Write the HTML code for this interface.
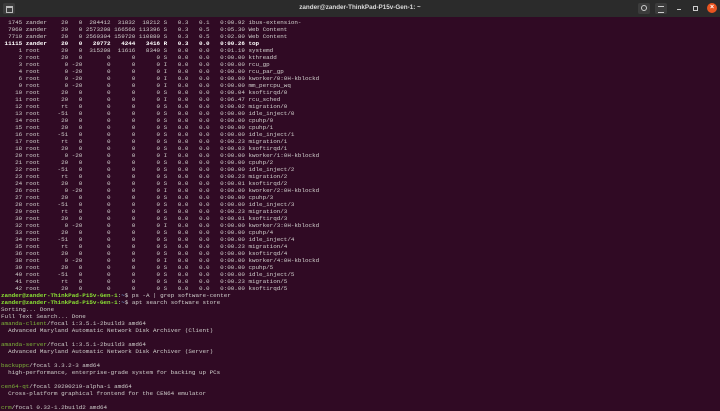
<!DOCTYPE html>
<html><head><meta charset="utf-8"><style>
html,body{margin:0;padding:0;width:720px;height:410px;overflow:hidden;background:#300a24;}
.bar{position:absolute;left:0;top:0;width:720px;height:17px;background:#2b2b2b;}
.title{position:absolute;left:0;width:720px;top:4px;text-align:center;color:#dcdcdc;font:bold 6.3px "Liberation Sans",sans-serif;}
.ib{position:absolute;top:3px;width:12px;height:11px;background:#3c3c3c;border-radius:2px;}
pre{position:absolute;left:1px;top:19px;margin:0;font-family:"Liberation Mono",monospace;font-size:5.9px;line-height:7px;color:#d0cfcc;white-space:pre;}
.g{color:#8ae234;font-weight:bold}.b{color:#729fcf;font-weight:bold}.p{color:#7fb83a}.w{color:#fff;font-weight:bold}
</style></head><body>
<div class="bar">
<div class="ib" style="left:3px"><div style="position:absolute;left:3px;top:3px;width:5px;height:4px;border:1px solid #bbb;border-top-width:2px"></div></div>
<div class="title">zander@zander-ThinkPad-P15v-Gen-1: ~</div>
<div class="ib" style="left:638px"><div style="position:absolute;left:3px;top:2px;width:4px;height:4px;border:1px solid #ccc;border-radius:50%"></div></div>
<div class="ib" style="left:655px"><div style="position:absolute;left:3px;top:3px;width:6px;height:5px;border-top:1px solid #ccc;border-bottom:1px solid #ccc"></div></div>
<div style="position:absolute;left:677px;top:9px;width:4px;height:1px;background:#ccc"></div>
<div style="position:absolute;left:693px;top:6px;width:3px;height:3px;border:1px solid #ccc"></div>
<div style="position:absolute;left:707px;top:3px;width:10px;height:10px;border-radius:50%;background:#e95420;color:#fff;font:bold 7px/10px 'Liberation Sans',sans-serif;text-align:center">×</div>
</div>
<pre>  1745 zander    20   0  284412  31832  18212 S   0.3   0.1   0:00.92 ibus-extension-
  7060 zander    20   0 2573208 166560 113396 S   0.3   0.5   0:05.30 Web Content
  7710 zander    20   0 2560304 159720 110880 S   0.3   0.5   0:02.80 Web Content
<span class="w"> 11115 zander    20   0   20772   4244   3416 R   0.3   0.0   0:00.26 top</span>
     1 root      20   0  315208  11616   8340 S   0.0   0.0   0:01.19 systemd
     2 root      20   0       0      0      0 S   0.0   0.0   0:00.00 kthreadd
     3 root       0 -20       0      0      0 I   0.0   0.0   0:00.00 rcu_gp
     4 root       0 -20       0      0      0 I   0.0   0.0   0:00.00 rcu_par_gp
     6 root       0 -20       0      0      0 I   0.0   0.0   0:00.00 kworker/0:0H-kblockd
     9 root       0 -20       0      0      0 I   0.0   0.0   0:00.00 mm_percpu_wq
    10 root      20   0       0      0      0 S   0.0   0.0   0:00.04 ksoftirqd/0
    11 root      20   0       0      0      0 I   0.0   0.0   0:06.47 rcu_sched
    12 root      rt   0       0      0      0 S   0.0   0.0   0:00.02 migration/0
    13 root     -51   0       0      0      0 S   0.0   0.0   0:00.00 idle_inject/0
    14 root      20   0       0      0      0 S   0.0   0.0   0:00.00 cpuhp/0
    15 root      20   0       0      0      0 S   0.0   0.0   0:00.00 cpuhp/1
    16 root     -51   0       0      0      0 S   0.0   0.0   0:00.00 idle_inject/1
    17 root      rt   0       0      0      0 S   0.0   0.0   0:00.23 migration/1
    18 root      20   0       0      0      0 S   0.0   0.0   0:00.03 ksoftirqd/1
    20 root       0 -20       0      0      0 I   0.0   0.0   0:00.00 kworker/1:0H-kblockd
    21 root      20   0       0      0      0 S   0.0   0.0   0:00.00 cpuhp/2
    22 root     -51   0       0      0      0 S   0.0   0.0   0:00.00 idle_inject/2
    23 root      rt   0       0      0      0 S   0.0   0.0   0:00.23 migration/2
    24 root      20   0       0      0      0 S   0.0   0.0   0:00.01 ksoftirqd/2
    26 root       0 -20       0      0      0 I   0.0   0.0   0:00.00 kworker/2:0H-kblockd
    27 root      20   0       0      0      0 S   0.0   0.0   0:00.00 cpuhp/3
    28 root     -51   0       0      0      0 S   0.0   0.0   0:00.00 idle_inject/3
    29 root      rt   0       0      0      0 S   0.0   0.0   0:00.23 migration/3
    30 root      20   0       0      0      0 S   0.0   0.0   0:00.01 ksoftirqd/3
    32 root       0 -20       0      0      0 I   0.0   0.0   0:00.00 kworker/3:0H-kblockd
    33 root      20   0       0      0      0 S   0.0   0.0   0:00.00 cpuhp/4
    34 root     -51   0       0      0      0 S   0.0   0.0   0:00.00 idle_inject/4
    35 root      rt   0       0      0      0 S   0.0   0.0   0:00.23 migration/4
    36 root      20   0       0      0      0 S   0.0   0.0   0:00.00 ksoftirqd/4
    38 root       0 -20       0      0      0 I   0.0   0.0   0:00.00 kworker/4:0H-kblockd
    39 root      20   0       0      0      0 S   0.0   0.0   0:00.00 cpuhp/5
    40 root     -51   0       0      0      0 S   0.0   0.0   0:00.00 idle_inject/5
    41 root      rt   0       0      0      0 S   0.0   0.0   0:00.23 migration/5
    42 root      20   0       0      0      0 S   0.0   0.0   0:00.00 ksoftirqd/5
<span class="g">zander@zander-ThinkPad-P15v-Gen-1</span>:<span class="b">~</span>$ ps -A | grep software-center
<span class="g">zander@zander-ThinkPad-P15v-Gen-1</span>:<span class="b">~</span>$ apt search software store
Sorting... Done
Full Text Search... Done
<span class="p">amanda-client</span>/focal 1:3.5.1-2build3 amd64
  Advanced Maryland Automatic Network Disk Archiver (Client)

<span class="p">amanda-server</span>/focal 1:3.5.1-2build3 amd64
  Advanced Maryland Automatic Network Disk Archiver (Server)

<span class="p">backuppc</span>/focal 3.3.2-3 amd64
  high-performance, enterprise-grade system for backing up PCs

<span class="p">cen64-qt</span>/focal 20200219-alpha-1 amd64
  Cross-platform graphical frontend for the CEN64 emulator

<span class="p">crm</span>/focal 0.32-1.2build2 amd64
</pre>
</body></html>
